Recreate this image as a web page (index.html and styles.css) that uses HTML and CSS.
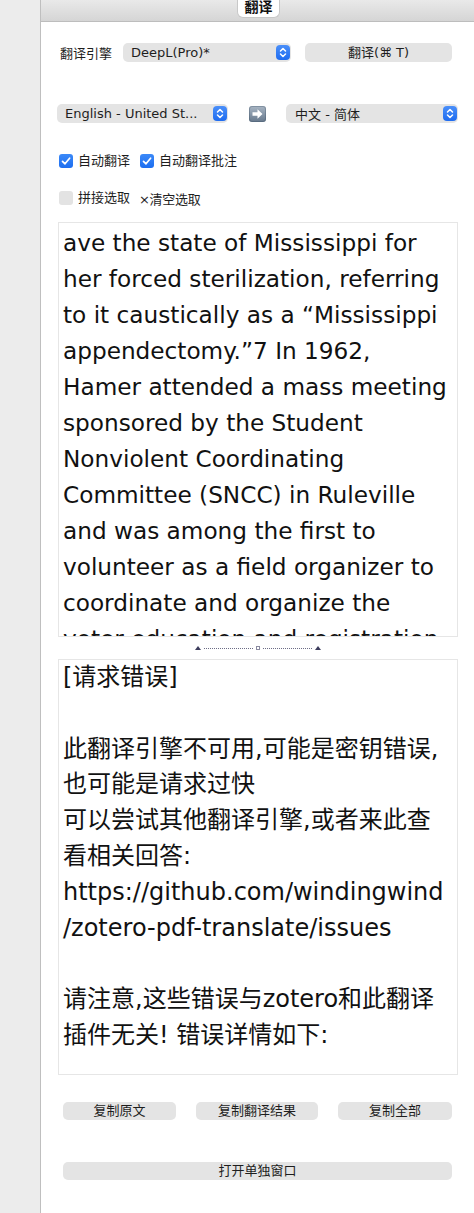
FILE: index.html
```html
<!DOCTYPE html>
<html lang="zh">
<head>
<meta charset="utf-8">
<title>翻译</title>
<link rel="stylesheet" href="styles.css">
</head>
<body>
<div class="sidebar"></div>
<div class="main">
  <div class="tabbar">
    <div class="tab">翻译</div>
  </div>
  <div class="content">
    <div class="row engine-row">
      <span class="label">翻译引擎</span>
      <div class="select engine-select">
        <span class="select-text">DeepL(Pro)*</span>
        <span class="stepper"><svg viewBox="0 0 14 15" width="14" height="15"><path d="M4.5 6 L7 3.5 L9.5 6" fill="none" stroke="#fff" stroke-width="1.5" stroke-linecap="round" stroke-linejoin="round"/><path d="M4.5 9 L7 11.5 L9.5 9" fill="none" stroke="#fff" stroke-width="1.5" stroke-linecap="round" stroke-linejoin="round"/></svg></span>
      </div>
      <button class="btn translate-btn">翻译(⌘ T)</button>
    </div>

    <div class="row lang-row">
      <div class="select lang-select">
        <span class="select-text">English - United St...</span>
        <span class="stepper"><svg viewBox="0 0 14 15" width="14" height="15"><path d="M4.5 6 L7 3.5 L9.5 6" fill="none" stroke="#fff" stroke-width="1.5" stroke-linecap="round" stroke-linejoin="round"/><path d="M4.5 9 L7 11.5 L9.5 9" fill="none" stroke="#fff" stroke-width="1.5" stroke-linecap="round" stroke-linejoin="round"/></svg></span>
      </div>
      <span class="swap-icon"><svg viewBox="0 0 17 16" width="17" height="16"><path d="M3.5 6.3 H8.5 V3.3 L13.5 8 L8.5 12.7 V9.7 H3.5 Z" fill="#fff"/></svg></span>
      <div class="select lang-select target">
        <span class="select-text">中文 - 简体</span>
        <span class="stepper"><svg viewBox="0 0 14 15" width="14" height="15"><path d="M4.5 6 L7 3.5 L9.5 6" fill="none" stroke="#fff" stroke-width="1.5" stroke-linecap="round" stroke-linejoin="round"/><path d="M4.5 9 L7 11.5 L9.5 9" fill="none" stroke="#fff" stroke-width="1.5" stroke-linecap="round" stroke-linejoin="round"/></svg></span>
      </div>
    </div>

    <div class="row check-row">
      <label class="check"><span class="box checked"><svg viewBox="0 0 14 14" width="14" height="14"><path d="M3.5 7.3 L6 9.8 L10.6 4.2" fill="none" stroke="#fff" stroke-width="1.7" stroke-linecap="round" stroke-linejoin="round"/></svg></span>自动翻译</label>
      <label class="check second"><span class="box checked"><svg viewBox="0 0 14 14" width="14" height="14"><path d="M3.5 7.3 L6 9.8 L10.6 4.2" fill="none" stroke="#fff" stroke-width="1.7" stroke-linecap="round" stroke-linejoin="round"/></svg></span>自动翻译批注</label>
    </div>

    <div class="row check-row2">
      <label class="check"><span class="box disabled"></span>拼接选取</label>
      <span class="clear">×清空选取</span>
    </div>

    <div class="textbox source">ave the state of Mississippi for<br>her forced sterilization, referring<br>to it caustically as a “Mississippi<br>appendectomy.”7 In 1962,<br>Hamer attended a mass meeting<br>sponsored by the Student<br>Nonviolent Coordinating<br>Committee (SNCC) in Ruleville<br>and was among the first to<br>volunteer as a field organizer to<br>coordinate and organize the<br>voter education and registration</div>

    <div class="splitter">
      <span class="tri"></span>
      <span class="dots"></span>
      <span class="grip"></span>
      <span class="dots"></span>
      <span class="tri"></span>
    </div>

    <div class="textbox result">[请求错误]<br><br>此翻译引擎不可用,可能是密钥错误,<br>也可能是请求过快<br>可以尝试其他翻译引擎,或者来此查<br>看相关回答:<br>https://github.com/windingwind<br>/zotero-pdf-translate/issues<br><br>请注意,这些错误与zotero和此翻译<br>插件无关! 错误详情如下:</div>

    <div class="row copy-row">
      <button class="btn copy1">复制原文</button>
      <button class="btn copy2">复制翻译结果</button>
      <button class="btn copy3">复制全部</button>
    </div>

    <button class="btn open-btn">打开单独窗口</button>
  </div>
</div>
</body>
</html>
```

FILE: styles.css
```css
html, body {
  margin: 0;
  padding: 0;
  background: #ffffff;
}
body {
  display: flex;
  min-height: 1213px;
  font-family: "DejaVu Sans", "Noto Sans CJK SC", sans-serif;
  color: #1a1a1a;
  font-size: 13px;
}
.sidebar {
  width: 40px;
  flex: none;
  background: #ececec;
  border-right: 1px solid #bfbfbf;
}
.main {
  flex: 1;
  display: flex;
  flex-direction: column;
  background: #fff;
}
.tabbar {
  height: 22px;
  box-sizing: border-box;
  background: linear-gradient(#e9e9e9, #d5d5d5);
  border-bottom: 1px solid #bdbdbd;
  display: flex;
  justify-content: center;
  align-items: flex-start;
}
.tab {
  margin-top: -3px;
  width: 43px;
  height: 21px;
  box-sizing: border-box;
  background: #fff;
  border: 1px solid #c8c8c8;
  border-top: none;
  border-radius: 0 0 6px 6px;
  font-weight: bold;
  font-size: 14px;
  line-height: 19px;
  text-align: center;
  color: #111;
  font-family: "Noto Sans CJK SC", sans-serif;
}
.content {
  padding: 0 18px 0 17px;
  display: flex;
  flex-direction: column;
}
.row {
  display: flex;
  align-items: center;
}
.label, .check, .clear, .btn, .select-text {
  font-family: "DejaVu Sans", "Noto Sans CJK SC", sans-serif;
  font-size: 13px;
  color: #1e1e1e;
}
.engine-row {
  margin-top: 21px;
  height: 19px;
}
.engine-row .label {
  margin-left: 2px;
  width: 63px;
  flex: none;
}
.select {
  height: 19px;
  box-sizing: border-box;
  background: #e4e4e4;
  border-radius: 5px;
  display: flex;
  align-items: center;
  justify-content: space-between;
  padding: 0 1px 0 8px;
  flex: none;
}
.engine-select {
  width: 168px;
}
.stepper {
  width: 14px;
  height: 15px;
  border-radius: 4px;
  background: linear-gradient(#4a8ff9, #1f6cf0);
  display: flex;
}
.btn {
  border: none;
  background: #e4e4e4;
  border-radius: 5px;
  height: 19px;
  padding: 0;
  line-height: 19px;
  text-align: center;
  flex: none;
}
.translate-btn {
  width: 147px;
  margin-left: 14px;
}
.lang-row {
  margin-top: 42px;
  height: 19px;
  margin-left: -1px;
}
.lang-select {
  width: 171px;
}
.lang-select.target {
  width: 172px;
  padding-left: 9px;
}
.swap-icon {
  width: 17px;
  height: 16px;
  margin: 0 20px 0 21px;
  border-radius: 3px;
  background: linear-gradient(#a9b6c4, #66788c);
  display: flex;
  box-shadow: inset 0 0 0 1px rgba(60, 80, 100, 0.35);
}
.check-row {
  margin-top: 31px;
  height: 14px;
  padding-left: 1px;
}
.check {
  display: flex;
  align-items: center;
  gap: 5px;
  line-height: 14px;
}
.check.second {
  margin-left: 10px;
}
.box {
  width: 14px;
  height: 14px;
  border-radius: 3px;
  display: flex;
  flex: none;
}
.box.checked {
  background: linear-gradient(#3b89f8, #1d6ef0);
}
.box.disabled {
  background: #e3e3e3;
}
.check-row2 {
  margin-top: 23px;
  height: 14px;
  padding-left: 1px;
}
.clear {
  margin-left: 9px;
  letter-spacing: -0.3px;
}
.textbox {
  box-sizing: border-box;
  border: 1px solid #e6e6e6;
  background: #fff;
  font-family: "DejaVu Sans", "Noto Sans CJK SC", sans-serif;
  font-size: 23.2px;
  line-height: 36px;
  color: #111;
  white-space: nowrap;
  overflow: hidden;
  padding: 2px 4px 0 4px;
}
.source {
  margin-top: 17px;
  height: 415px;
}
.splitter {
  height: 22px;
  display: flex;
  align-items: center;
  justify-content: center;
  gap: 3px;
}
.tri {
  width: 0;
  height: 0;
  border-left: 3.5px solid transparent;
  border-right: 3.5px solid transparent;
  border-bottom: 4px solid #3c3c5c;
}
.dots {
  width: 49px;
  height: 1px;
  background: repeating-linear-gradient(90deg, #6d6d86 0 1px, transparent 1px 2px);
}
.grip {
  width: 4px;
  height: 4px;
  border: 1px solid #8a8aa0;
  box-sizing: border-box;
}
.result {
  height: 416px;
  padding-top: 0;
  font-size: 24px;
  line-height: 35.8px;
}
.copy-row {
  margin-top: 27px;
  padding-left: 5px;
  height: 18px;
  gap: 20px;
}
.copy-row .btn, .open-btn {
  height: 18px;
  line-height: 18px;
}
.copy1 { width: 113px; }
.copy2 { width: 122px; }
.copy3 { width: 114px; }
.open-btn {
  margin-top: 42px;
  margin-left: 5px;
  width: 389px;
}
```
